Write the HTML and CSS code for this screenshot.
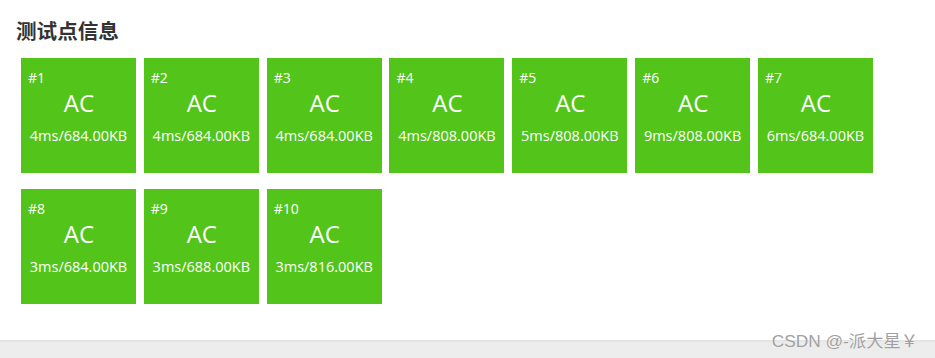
FILE: index.html
```html
<!DOCTYPE html>
<html lang="zh">
<head>
<meta charset="utf-8">
<title>测试点信息</title>
<link rel="stylesheet" href="styles.css">
</head>
<body>
<div class="page">
  <main class="panel">
    <h2 class="title">测试点信息</h2>
    <div class="cases">
      <div class="case"><div class="num">#1</div><div class="verdict">AC</div><div class="usage">4ms/684.00KB</div></div>
      <div class="case"><div class="num">#2</div><div class="verdict">AC</div><div class="usage">4ms/684.00KB</div></div>
      <div class="case"><div class="num">#3</div><div class="verdict">AC</div><div class="usage">4ms/684.00KB</div></div>
      <div class="case"><div class="num">#4</div><div class="verdict">AC</div><div class="usage">4ms/808.00KB</div></div>
      <div class="case"><div class="num">#5</div><div class="verdict">AC</div><div class="usage">5ms/808.00KB</div></div>
      <div class="case"><div class="num">#6</div><div class="verdict">AC</div><div class="usage">9ms/808.00KB</div></div>
      <div class="case"><div class="num">#7</div><div class="verdict">AC</div><div class="usage">6ms/684.00KB</div></div>
      <div class="case"><div class="num">#8</div><div class="verdict">AC</div><div class="usage">3ms/684.00KB</div></div>
      <div class="case"><div class="num">#9</div><div class="verdict">AC</div><div class="usage">3ms/688.00KB</div></div>
      <div class="case"><div class="num">#10</div><div class="verdict">AC</div><div class="usage">3ms/816.00KB</div></div>
    </div>
  </main>
  <footer class="bar"></footer>
  <div class="watermark">CSDN @-派大星￥</div>
</div>
</body>
</html>
```

FILE: styles.css
```css
html, body {
  margin: 0;
  padding: 0;
  background: #fff;
}

.page {
  position: relative;
  width: 935px;
  height: 358px;
  display: flex;
  flex-direction: column;
  overflow: hidden;
}

.panel {
  flex: 1;
  padding: 16px 0 0 16px;
}

.title {
  margin: 0;
  font-family: "Noto Sans CJK SC", sans-serif;
  font-size: 20.6px;
  font-weight: 700;
  line-height: 28px;
  color: #333;
}

.cases {
  display: flex;
  flex-wrap: wrap;
  column-gap: 7.83px;
  row-gap: 16px;
  margin: 14px 0 0 5px;
  width: 870px;
}

.case {
  width: 115px;
  height: 115px;
  box-sizing: border-box;
  background: #52c41a;
  color: #fff;
  font-family: "Open Sans", "Noto Sans", sans-serif;
  padding: 10px 6px 0 7px;
}

.num {
  font-size: 14px;
  line-height: 19px;
}

.verdict {
  font-size: 24px;
  line-height: 31px;
  text-align: center;
}

.usage {
  margin: 8px -6px 0 -7px;
  font-size: 14.5px;
  line-height: 19px;
  text-align: center;
  white-space: nowrap;
}

.bar {
  height: 18px;
  background: linear-gradient(#e2e2e2, #ececec 3px, #ededed);
}

.watermark {
  position: absolute;
  right: 17px;
  bottom: 7px;
  font-family: "Liberation Sans", "Noto Sans CJK SC", sans-serif;
  font-size: 17.3px;
  line-height: 20px;
  color: #a0a0a0;
  text-shadow: 0 0 1px #fff;
}
```
